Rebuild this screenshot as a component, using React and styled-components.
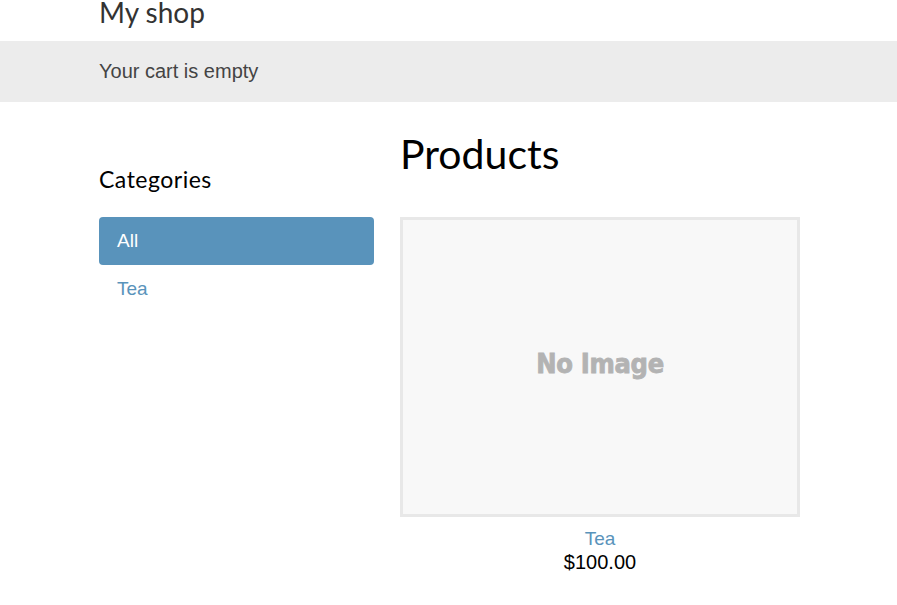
import React from "react";
import styled, { createGlobalStyle } from "styled-components";

const GlobalStyle = createGlobalStyle`
  html, body {
    margin: 0;
    padding: 0;
    background: #fff;
    font-family: "Liberation Sans", Arial, sans-serif;
    color: #000;
  }
`;

const headingFont = `"Lato", "Noto Sans", sans-serif`;

const Header = styled.header`
  height: 41px;
  padding: 0 99px;
  box-sizing: border-box;
  overflow: hidden;
`;

const Logo = styled.a`
  display: block;
  margin-top: -2px;
  font-family: ${headingFont};
  font-size: 28px;
  line-height: 28px;
  color: #333;
  text-decoration: none;
`;

const Subheader = styled.div`
  height: 61px;
  padding: 0 99px;
  display: flex;
  align-items: center;
  background: #ececec;
  font-size: 20px;
  color: #444;
`;

const Content = styled.main`
  display: flex;
  gap: 26px;
  padding: 0 99px;
`;

const Sidebar = styled.aside`
  width: 275px;
  padding-top: 65px;
  flex-shrink: 0;
`;

const SideTitle = styled.h3`
  margin: -2px 0 24px;
  font-family: ${headingFont};
  font-weight: 400;
  font-size: 23px;
  letter-spacing: 0.5px;
  line-height: 28px;
`;

const CategoryList = styled.ul`
  list-style: none;
  margin: 0;
  padding: 0;
`;

const CategoryItem = styled.li`
  a {
    display: block;
    height: 48px;
    line-height: 48px;
    padding: 0 18px;
    border-radius: 4px;
    font-size: 19px;
    text-decoration: none;
    color: ${p => (p.$selected ? "#fff" : "#5993bb")};
    background: ${p => (p.$selected ? "#5993bb" : "transparent")};
  }
`;

const Main = styled.section`
  flex: 1;
`;

const Title = styled.h1`
  margin: 0;
  padding-top: 26px;
  font-family: ${headingFont};
  font-weight: 400;
  font-size: 41px;
  line-height: 52px;
`;

const ProductCard = styled.div`
  margin-top: 37px;
  width: 400px;
  text-align: center;
`;

const ImageBox = styled.div`
  width: 400px;
  height: 300px;
  box-sizing: border-box;
  border: 3px solid #e8e8e8;
  background: #f8f8f8;
  display: flex;
  align-items: center;
  justify-content: center;
`;

const NoImage = styled.span`
  font-family: "DejaVu Sans Condensed", "Liberation Sans Narrow", "Liberation Sans", sans-serif;
  font-stretch: condensed;
  font-weight: 700;
  font-size: 27px;
  letter-spacing: -0.3px;
  -webkit-text-stroke: 0.8px #b3b3b3;
  color: #b3b3b3;
  margin-top: -8px;
`;

const ProductName = styled.a`
  display: block;
  margin-top: 11px;
  font-size: 19px;
  line-height: 22px;
  color: #5993bb;
  text-decoration: none;
`;

const Price = styled.div`
  font-size: 20px;
  line-height: 24px;
`;

const categories = [
  { name: "All", selected: true },
  { name: "Tea", selected: false },
];

export default function App() {
  return (
    <>
      <GlobalStyle />
      <Header>
        <Logo href="#">My shop</Logo>
      </Header>
      <Subheader>Your cart is empty</Subheader>
      <Content>
        <Sidebar>
          <SideTitle>Categories</SideTitle>
          <CategoryList>
            {categories.map(c => (
              <CategoryItem key={c.name} $selected={c.selected}>
                <a href="#">{c.name}</a>
              </CategoryItem>
            ))}
          </CategoryList>
        </Sidebar>
        <Main>
          <Title>Products</Title>
          <ProductCard>
            <ImageBox>
              <NoImage>No Image</NoImage>
            </ImageBox>
            <ProductName href="#">Tea</ProductName>
            <Price>$100.00</Price>
          </ProductCard>
        </Main>
      </Content>
    </>
  );
}
